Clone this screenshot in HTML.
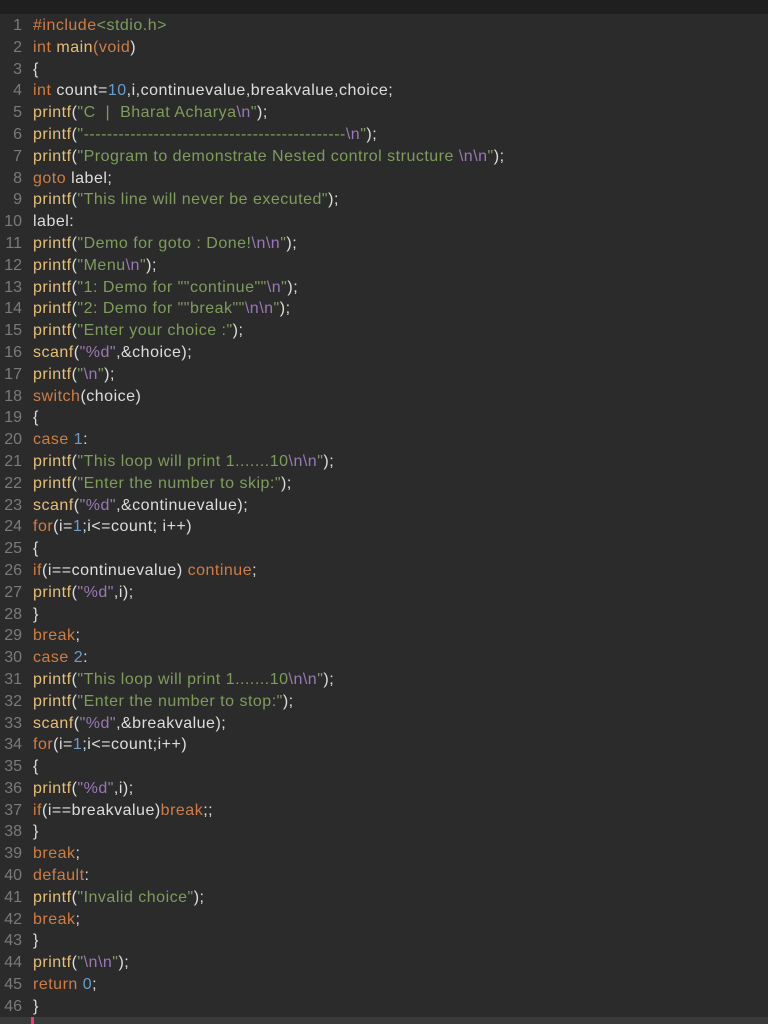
<!DOCTYPE html>
<html><head><meta charset="utf-8"><style>
body{margin:0;width:768px;height:1024px;background:#2b2b2b;overflow:hidden;font-family:"Liberation Sans",sans-serif;}
.top{position:absolute;left:0;top:0;width:768px;height:14px;background:#1f1f1f}
.bot{position:absolute;left:0;top:1017px;width:768px;height:7px;background:#3a3a3a}
.cur{position:absolute;left:31px;top:1017px;width:3px;height:7px;background:#e0407a}
.code{position:absolute;left:0;top:15px;}
.l{height:21.8px;line-height:21.8px;font-size:16px;color:#dedede;white-space:pre;position:relative;letter-spacing:0.5px}
.l i{font-style:normal;position:absolute;left:0;width:22px;text-align:right;color:#7a7a7a;letter-spacing:0}
.l b{font-weight:normal;position:absolute;left:33px}
.f{color:#e7bf77}.k{color:#cf7d46}.s{color:#7f9c5c}.n{color:#6b9ccb}.e{color:#9a78b6}
</style></head><body>
<div class="top"></div>
<div class="code">
<div class="l"><i>1</i><b><span class="k">#include</span><span class="s">&lt;stdio.h&gt;</span></b></div>
<div class="l"><i>2</i><b><span class="k">int</span> <span class="f">main</span><span class="k">(void</span>)</b></div>
<div class="l"><i>3</i><b>{</b></div>
<div class="l"><i>4</i><b><span class="k">int</span> count=<span class="n">10</span>,i,continuevalue,breakvalue,choice;</b></div>
<div class="l"><i>5</i><b><span class="f">printf</span>(<span class="s">"C  |  Bharat Acharya</span><span class="e">\n</span><span class="s">"</span>);</b></div>
<div class="l"><i>6</i><b><span class="f">printf</span>(<span class="s">"---------------------------------------------</span><span class="e">\n</span><span class="s">"</span>);</b></div>
<div class="l"><i>7</i><b><span class="f">printf</span>(<span class="s">"Program to demonstrate Nested control structure </span><span class="e">\n\n</span><span class="s">"</span>);</b></div>
<div class="l"><i>8</i><b><span class="k">goto</span> label;</b></div>
<div class="l"><i>9</i><b><span class="f">printf</span>(<span class="s">"This line will never be executed"</span>);</b></div>
<div class="l"><i>10</i><b>label:</b></div>
<div class="l"><i>11</i><b><span class="f">printf</span>(<span class="s">"Demo for goto : Done!</span><span class="e">\n\n</span><span class="s">"</span>);</b></div>
<div class="l"><i>12</i><b><span class="f">printf</span>(<span class="s">"Menu</span><span class="e">\n</span><span class="s">"</span>);</b></div>
<div class="l"><i>13</i><b><span class="f">printf</span>(<span class="s">"1: Demo for ""continue""</span><span class="e">\n</span><span class="s">"</span>);</b></div>
<div class="l"><i>14</i><b><span class="f">printf</span>(<span class="s">"2: Demo for ""break""</span><span class="e">\n\n</span><span class="s">"</span>);</b></div>
<div class="l"><i>15</i><b><span class="f">printf</span>(<span class="s">"Enter your choice :"</span>);</b></div>
<div class="l"><i>16</i><b><span class="f">scanf</span>(<span class="e">"%d"</span>,&amp;choice);</b></div>
<div class="l"><i>17</i><b><span class="f">printf</span>(<span class="s">"</span><span class="e">\n</span><span class="s">"</span>);</b></div>
<div class="l"><i>18</i><b><span class="k">switch</span>(choice)</b></div>
<div class="l"><i>19</i><b>{</b></div>
<div class="l"><i>20</i><b><span class="k">case</span> <span class="n">1</span>:</b></div>
<div class="l"><i>21</i><b><span class="f">printf</span>(<span class="s">"This loop will print 1.......10</span><span class="e">\n\n</span><span class="s">"</span>);</b></div>
<div class="l"><i>22</i><b><span class="f">printf</span>(<span class="s">"Enter the number to skip:"</span>);</b></div>
<div class="l"><i>23</i><b><span class="f">scanf</span>(<span class="e">"%d"</span>,&amp;continuevalue);</b></div>
<div class="l"><i>24</i><b><span class="k">for</span>(i=<span class="n">1</span>;i&lt;=count; i++)</b></div>
<div class="l"><i>25</i><b>{</b></div>
<div class="l"><i>26</i><b><span class="k">if</span>(i==continuevalue) <span class="k">continue</span>;</b></div>
<div class="l"><i>27</i><b><span class="f">printf</span>(<span class="e">"%d"</span>,i);</b></div>
<div class="l"><i>28</i><b>}</b></div>
<div class="l"><i>29</i><b><span class="k">break</span>;</b></div>
<div class="l"><i>30</i><b><span class="k">case</span> <span class="n">2</span>:</b></div>
<div class="l"><i>31</i><b><span class="f">printf</span>(<span class="s">"This loop will print 1.......10</span><span class="e">\n\n</span><span class="s">"</span>);</b></div>
<div class="l"><i>32</i><b><span class="f">printf</span>(<span class="s">"Enter the number to stop:"</span>);</b></div>
<div class="l"><i>33</i><b><span class="f">scanf</span>(<span class="e">"%d"</span>,&amp;breakvalue);</b></div>
<div class="l"><i>34</i><b><span class="k">for</span>(i=<span class="n">1</span>;i&lt;=count;i++)</b></div>
<div class="l"><i>35</i><b>{</b></div>
<div class="l"><i>36</i><b><span class="f">printf</span>(<span class="e">"%d"</span>,i);</b></div>
<div class="l"><i>37</i><b><span class="k">if</span>(i==breakvalue)<span class="k">break</span>;;</b></div>
<div class="l"><i>38</i><b>}</b></div>
<div class="l"><i>39</i><b><span class="k">break</span>;</b></div>
<div class="l"><i>40</i><b><span class="k">default</span>:</b></div>
<div class="l"><i>41</i><b><span class="f">printf</span>(<span class="s">"Invalid choice"</span>);</b></div>
<div class="l"><i>42</i><b><span class="k">break</span>;</b></div>
<div class="l"><i>43</i><b>}</b></div>
<div class="l"><i>44</i><b><span class="f">printf</span>(<span class="s">"</span><span class="e">\n\n</span><span class="s">"</span>);</b></div>
<div class="l"><i>45</i><b><span class="k">return</span> <span class="n">0</span>;</b></div>
<div class="l"><i>46</i><b>}</b></div>
</div>
<div class="bot"></div><div class="cur"></div>
</body></html>
